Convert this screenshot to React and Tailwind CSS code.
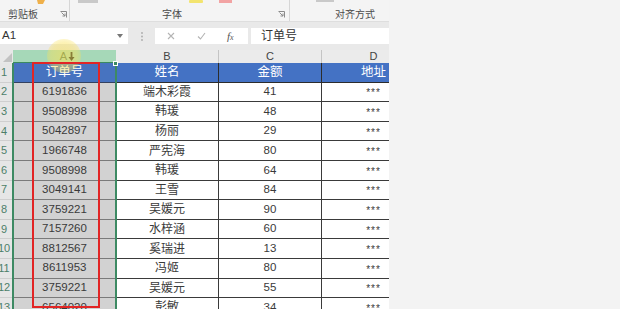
import React from "react";

const rows = [
  ["6191836", "端木彩霞", "41"],
  ["9508998", "韩瑗", "48"],
  ["5042897", "杨丽", "29"],
  ["1966748", "严宪海", "80"],
  ["9508998", "韩瑗", "64"],
  ["3049141", "王雪", "84"],
  ["3759221", "吴媛元", "90"],
  ["7157260", "水梓涵", "60"],
  ["8812567", "奚瑞进", "13"],
  ["8611953", "冯姬", "80"],
  ["3759221", "吴媛元", "55"],
  ["6564020", "彭敏", "34"],
];

function Launcher() {
  return (
    <svg width="7" height="7" viewBox="0 0 7 7" className="shrink-0">
      <path d="M0.5 0.5h6v6" fill="none" stroke="#8a8a8a" strokeWidth="1" />
      <path d="M1.5 1.5l3.5 3.5M2.5 5h2.5V2.5" fill="none" stroke="#8a8a8a" strokeWidth="1" />
    </svg>
  );
}

function Ribbon() {
  return (
    <div className="relative flex h-[21px] shrink-0 bg-[#f4f4f4] text-[10px] leading-none text-[#4a4a4a]">
      {/* cropped icon remnants at the top edge */}
      <svg width="389" height="5" className="absolute left-0 top-0">
        <path d="M37 0h8l-2 4h-5z" fill="#efb04a" />
        <rect x="78" y="0" width="20" height="3" fill="#c9c9c9" />
        <rect x="189" y="0" width="14" height="3" rx="1" fill="#f3e46e" />
        <rect x="219" y="0" width="13" height="3" fill="#f2a3a3" />
        <rect x="316" y="0" width="18" height="2" fill="#c9c9c9" />
      </svg>
      <div className="flex w-[70px] items-center justify-between border-r border-[#d6d6d6] pb-[1px] pl-[8px] pr-[2px] pt-[9px]">
        <span>剪贴板</span>
        <Launcher />
      </div>
      <div className="flex w-[220px] items-center justify-between border-r border-[#d6d6d6] pb-[1px] pl-[92px] pr-[4px] pt-[9px]">
        <span>字体</span>
        <Launcher />
      </div>
      <div className="flex flex-1 items-center pb-[1px] pl-[45px] pt-[9px]">
        <span>对齐方式</span>
      </div>
    </div>
  );
}

function FormulaBar() {
  return (
    <div className="flex h-[29px] shrink-0 items-start border-t border-[#dedede] bg-[#e9e9e9] pt-[6px]">
      <div className="flex h-[16px] w-[128px] items-center justify-between bg-white pl-[2px] pr-[5px] text-[11.5px] text-[#333]">
        <span>A1</span>
        <svg width="6" height="4" viewBox="0 0 6 4">
          <path d="M0 0h6L3 4z" fill="#777" />
        </svg>
      </div>
      <div className="flex h-[16px] w-[27px] items-center justify-center">
        <svg width="2" height="9" viewBox="0 0 2 9">
          <circle cx="1" cy="1" r="0.9" fill="#aaa" />
          <circle cx="1" cy="4.5" r="0.9" fill="#aaa" />
          <circle cx="1" cy="8" r="0.9" fill="#aaa" />
        </svg>
      </div>
      <div className="flex h-[16px] w-[93px] items-center bg-white pl-[12px]">
        <svg width="8" height="8" viewBox="0 0 8 8" className="ml-[0px]">
          <path d="M1 1l6 6M7 1L1 7" stroke="#b4b4b4" strokeWidth="1.1" />
        </svg>
        <svg width="9" height="8" viewBox="0 0 9 8" className="ml-[22px]">
          <path d="M1 4.5l2.5 2.5L8 1" fill="none" stroke="#b4b4b4" strokeWidth="1.1" />
        </svg>
        <span className="ml-[21px] font-['Liberation_Serif',serif] text-[11px] italic leading-none text-[#555]">
          f<span className="text-[8px]">x</span>
        </span>
      </div>
      <div className="ml-[3px] flex h-[16px] flex-1 items-center bg-white pl-[10px] text-[12px] text-[#333]">
        订单号
      </div>
    </div>
  );
}

function ColumnHeaders() {
  return (
    <div className="flex h-[13px] shrink-0 text-[11px] leading-none text-[#444]">
      <div className="relative w-[13px] shrink-0 bg-[#e8e8e8]">
        <svg width="9" height="9" viewBox="0 0 9 9" className="absolute bottom-[1px] right-[1px]">
          <path d="M9 0v9H0z" fill="#c2c2c2" />
        </svg>
      </div>
      <div className="flex w-[103px] shrink-0 items-center justify-center border-b border-[#3b8a60] bg-[#a6d8b8] pl-[6px] text-[#2f5f45]">
        <span>A</span>
        <svg width="7" height="9" viewBox="0 0 7 9" className="ml-[1px]">
          <path d="M3.5 0v6" stroke="#111" strokeWidth="1.8" />
          <path d="M0.5 5h6L3.5 9z" fill="#111" />
        </svg>
      </div>
      <div className="flex w-[103px] shrink-0 items-center justify-center border-r border-[#c4c4c4] bg-[#ebebeb]">B</div>
      <div className="flex w-[103px] shrink-0 items-center justify-center border-r border-[#c4c4c4] bg-[#ebebeb]">C</div>
      <div className="flex w-[103px] shrink-0 items-center justify-center bg-[#ebebeb]">D</div>
    </div>
  );
}

function RowNum({ n }) {
  return (
    <div className="w-[13px] shrink-0 overflow-hidden border-b border-[#cfcfcf] bg-[#e6e6e6]">
      <div className="-ml-[6px] flex h-full w-[20px] items-center justify-center text-[11px] text-[#4d7f69]">
        {n}
      </div>
    </div>
  );
}

function HeaderRow() {
  return (
    <div className="flex h-[19.6px] shrink-0 text-[12.5px] leading-none text-white">
      <RowNum n={1} />
      <div className="flex w-[103px] shrink-0 items-center justify-center border-b border-[#33415f] bg-[#4773c0]">订单号</div>
      <div className="flex w-[103px] shrink-0 items-center justify-center border-b border-r border-[#2c2c2c] bg-[#4472c4]">姓名</div>
      <div className="flex w-[103px] shrink-0 items-center justify-center border-b border-r border-[#2c2c2c] bg-[#4472c4]">金额</div>
      <div className="flex w-[103px] shrink-0 items-center justify-center border-b border-[#2c2c2c] bg-[#4472c4]">地址</div>
    </div>
  );
}

function DataRow({ n, row }) {
  return (
    <div className="flex h-[19.6px] shrink-0 text-[11.5px] leading-none text-[#3a3a3a]">
      <RowNum n={n} />
      <div className="flex w-[103px] shrink-0 items-center justify-center border-b border-[#7a7a7a] bg-[#d2d2d2]">
        {row[0]}
      </div>
      <div className="flex w-[103px] shrink-0 items-center justify-center border-b border-r border-[#3a3a3a] bg-white text-[12px]">
        {row[1]}
      </div>
      <div className="flex w-[103px] shrink-0 items-center justify-center border-b border-r border-[#3a3a3a] bg-white">
        {row[2]}
      </div>
      <div className="flex w-[103px] shrink-0 items-center justify-center border-b border-[#3a3a3a] bg-white pt-[3px] text-[10px] tracking-[1px]">
        ***
      </div>
    </div>
  );
}

export default function App() {
  return (
    <div className="flex h-[309px] w-[620px] overflow-hidden bg-[#f3f3f3] font-['Liberation_Sans','Noto_Sans_CJK_SC',sans-serif]">
      <div className="relative flex w-[389px] shrink-0 flex-col overflow-hidden">
        <Ribbon />
        <FormulaBar />
        <ColumnHeaders />
        <HeaderRow />
        {rows.map((row, i) => (
          <DataRow key={i} n={i + 2} row={row} />
        ))}

        {/* cursor highlight */}
        <div className="pointer-events-none absolute left-[47px] top-[39px] h-[34px] w-[34px] rounded-full bg-[radial-gradient(circle,rgba(250,226,90,0.6)_0%,rgba(250,226,90,0.45)_55%,rgba(250,226,90,0)_100%)]" />

        {/* column A selection */}
        <div className="pointer-events-none absolute left-[12px] top-[63px] h-[260px] w-[105px] border-x-2 border-[#3d8a63]" />
        <div className="pointer-events-none absolute left-[113px] top-[61px] h-[5px] w-[5px] border border-white bg-[#3d8a63]" />

        {/* red marker box */}
        <div className="pointer-events-none absolute left-[32px] top-[62px] h-[246px] w-[68px] border-2 border-[#e22525]" />
      </div>
      <div className="flex-1" />
    </div>
  );
}
